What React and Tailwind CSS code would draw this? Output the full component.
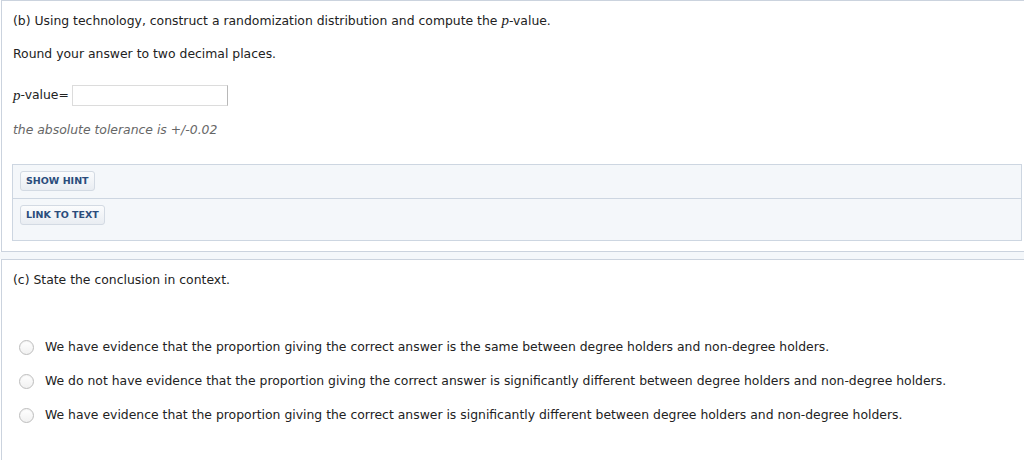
import React from "react";

const options = [
  "We have evidence that the proportion giving the correct answer is the same between degree holders and non-degree holders.",
  "We do not have evidence that the proportion giving the correct answer is significantly different between degree holders and non-degree holders.",
  "We have evidence that the proportion giving the correct answer is significantly different between degree holders and non-degree holders.",
];

const HintButton = ({ children }) => (
  <button className="h-[20px] px-[5px] rounded-[3px] border border-[#d3dae3] bg-gradient-to-b from-[#fbfcfd] to-[#e9edf2] text-[9.5px] font-bold text-[#2b4d7c] leading-none">
    {children}
  </button>
);

const App = () => {
  return (
    <div
      className="w-[1024px] h-[460px] overflow-hidden bg-white text-[#222] text-[12.4px]"
      style={{ fontFamily: '"DejaVu Sans", Verdana, sans-serif' }}
    >
      {/* part (b) */}
      <div className="ml-px mr-[-8px] h-[252px] border border-[#cbd3de] pt-[11px]">
        <p className="pl-[11px] leading-[16px]">
          (b) Using technology, construct a randomization distribution and compute the{" "}
          <i style={{ fontFamily: '"Liberation Serif", serif' }} className="text-[15px]">p</i>-value.
        </p>
        <p className="pl-[11px] mt-[17px] leading-[16px]">Round your answer to two decimal places.</p>
        <div className="pl-[11px] mt-[23px] flex items-center h-[20px]">
          <i style={{ fontFamily: '"Liberation Serif", serif' }} className="text-[15px]">p</i>
          <span>-value=</span>
          <input className="ml-[3px] w-[156px] h-[21px] border border-[#dcdcdc] border-r-[#b8b8b8] outline-none" />
        </div>
        <p className="pl-[11px] mt-[17px] italic text-[#666] leading-[16px]">
          the absolute tolerance is +/-0.02
        </p>
        <div className="ml-[10px] mr-[9px] mt-[26px] border border-[#cdd6e1] bg-[#f4f7fa]">
          <div className="h-[34px] pl-[7px] pt-[6px] border-b border-[#cdd6e1]">
            <HintButton>SHOW HINT</HintButton>
          </div>
          <div className="h-[41px] pl-[7px] pt-[6px]">
            <HintButton>LINK TO TEXT</HintButton>
          </div>
        </div>
      </div>

      <div className="h-[7px] bg-[#f4f7fa]" />

      {/* part (c) */}
      <div className="ml-px mr-[-8px] h-[220px] border border-[#cbd3de] pt-[12px]">
        <p className="pl-[11px] leading-[16px]">(c) State the conclusion in context.</p>
        <div className="mt-[51px] flex flex-col gap-[18px] pl-[17px]">
          {options.map((text) => (
            <label key={text} className="flex items-center h-[16px]">
              <span className="w-[15px] h-[15px] rounded-full border border-[#bdbdbd] bg-gradient-to-b from-white to-[#f1f1f1] shadow-[inset_0_1px_1px_rgba(0,0,0,0.05)]" />
              <span className="ml-[11px] leading-[16px]">{text}</span>
            </label>
          ))}
        </div>
      </div>
    </div>
  );
};

export default App;
